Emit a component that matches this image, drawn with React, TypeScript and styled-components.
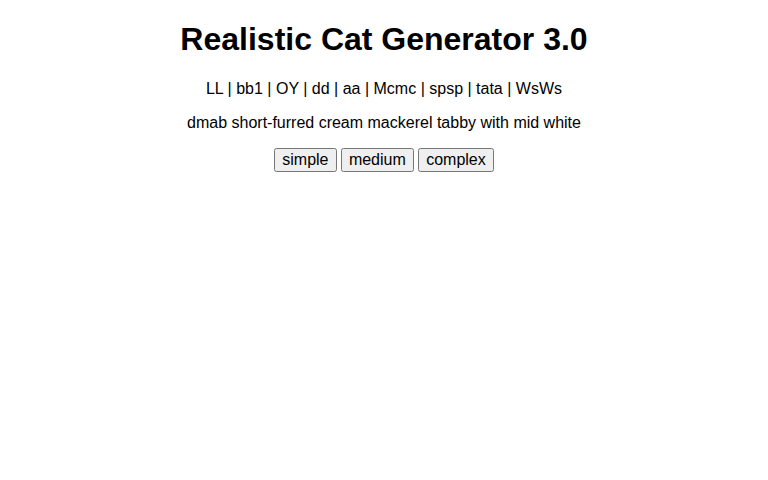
import styled, { createGlobalStyle } from "styled-components";

const GlobalStyle = createGlobalStyle`
  body {
    margin: 0 8px;
    font-family: "Liberation Sans", Arial, sans-serif;
    color: #000;
    background: #fff;
  }
`;

const Page = styled.main`
  text-align: center;
`;

const Title = styled.h1`
  font-size: 32px;
  font-weight: bold;
  margin: 21.44px 0;
`;

const Line = styled.p`
  font-size: 16px;
  margin: 16px 0;
`;

const Controls = styled.div`
  margin: 16px 0;
`;

// spacing stands in for the whitespace between inline buttons
const ComplexityButton = styled.button`
  font-family: inherit;
  font-size: 16px;
  margin: 0 2.2px;
`;

const genotype = ["LL", "bb1", "OY", "dd", "aa", "Mcmc", "spsp", "tata", "WsWs"];
const levels = ["simple", "medium", "complex"];

const App = () => {
  return (
    <Page>
      <GlobalStyle />
      <Title>Realistic Cat Generator 3.0</Title>
      <Line>{genotype.join(" | ")}</Line>
      <Line>dmab short-furred cream mackerel tabby with mid white</Line>
      <Controls>
        {levels.map((level) => (
          <ComplexityButton key={level}>{level}</ComplexityButton>
        ))}
      </Controls>
    </Page>
  );
};

export default App;
